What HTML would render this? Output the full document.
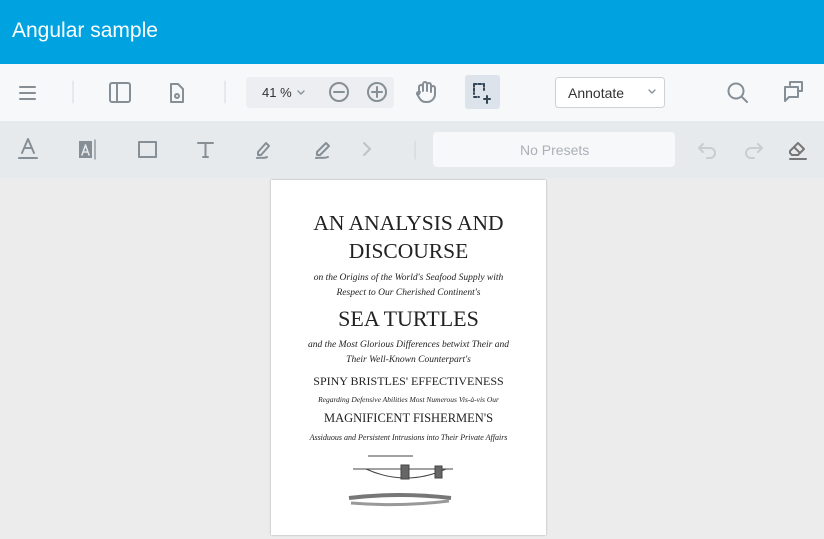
<html><head><style>
body{margin:0;width:824px;height:539px;overflow:hidden;background:#ececec;font-family:"Liberation Sans",sans-serif;position:relative}
.hdr{position:absolute;left:0;top:0;width:824px;height:64px;background:#00a3e0;color:#fff;font-size:21px}
.hdr span{position:absolute;left:12px;top:19px}
.tb1{position:absolute;top:64px;left:0;width:824px;height:57px;background:#f7f8fa}
.tb2{position:absolute;top:121px;left:0;width:824px;height:57px;background:#e7eaed}
svg{position:absolute}
.page{position:absolute;left:271px;top:180px;width:275px;height:355px;background:#fff;box-shadow:0 0 2px rgba(0,0,0,.3);font-family:"Liberation Serif",serif;color:#222;text-align:center}
.page div{position:absolute;left:0;width:275px;white-space:nowrap}
.i{font-style:italic}
</style></head><body>
<div class="hdr"><span>Angular sample</span></div>
<div class="tb1">
<svg width="824" height="57" viewBox="0 64 824 57" fill="none" stroke="#868e96" stroke-width="2" stroke-linecap="round" stroke-linejoin="round">
<path d="M20 87h15M20 93h15M20 99h15"/>
<path d="M73 81v22M225 81v22" stroke="#d6dadf" stroke-width="1"/>
<rect x="110" y="83" width="20" height="19" rx="2"/><path d="M117 83v19"/>
<path d="M171 84h7l5 5v13h-12z"/><circle cx="177" cy="96" r="2"/>
<rect x="246" y="77" width="148" height="31" rx="4" fill="#eceef1" stroke="none"/>
<circle cx="339" cy="92" r="9"/><path d="M334 92h10"/>
<circle cx="377" cy="92" r="9"/><path d="M372 92h10M377 87v10"/>
<path d="M298 91l3 3 3-3" stroke-width="1.3"/>
<path d="M419 94v-7a2 2 0 014 0v4v-7a2 2 0 014 0v7v-6a2 2 0 014 0v7v-4a2 2 0 014 0v6a8 8 0 01-8 8h-1a7 7 0 01-6-3l-3-5a2 2 0 013-2z"/>
<rect x="465" y="75" width="35" height="34" rx="3" fill="#dce3ea" stroke="none"/>
<path d="M474 84h10M474 84v10M484 84v6M474 97h5M487 96v7M484 99h6" stroke="#345" stroke-dasharray="2.5 2"/>
<rect x="555.5" y="77.5" width="109" height="30" rx="3" fill="#fff" stroke="#cdd2d7" stroke-width="1"/>
<path d="M649 90l3 3 3-3" stroke-width="1.3"/>
<circle cx="736" cy="91" r="7.5"/><path d="M742 97l5 5"/>
<path d="M790 85v-3h12v9h-3M785 87h13v10h-9l-4 4z"/>
</svg>
<span style="position:absolute;left:262px;top:21px;font-size:13px;color:#333">41 %</span>
<span style="position:absolute;left:568px;top:21px;font-size:14px;color:#333">Annotate</span>
</div>
<div class="tb2">
<svg width="824" height="57" viewBox="0 121 824 57" fill="none" stroke="#868e96" stroke-width="2" stroke-linecap="round" stroke-linejoin="round">
<path d="M22 153l6-14 6 14M24.5 148h7M19 158h18"/>
<rect x="79" y="141" width="13" height="17" fill="#868e96" stroke="none"/><path d="M82 155l3.5-10 3.5 10M83 152h5" stroke="#e7eaed" stroke-width="1.5"/><path d="M95 140v19" stroke-width="1.3"/>
<rect x="139" y="142" width="17" height="15"/>
<path d="M198 143h15M205.5 143v14M203 157h5"/>
<path d="M258 152l8-9 3 3-8 9h-3zM257 158c3-1 7 1 10-1"/>
<path d="M317 152l9-9 3 3-9 9h-3zM316 158c3-1 7 1 12-1"/>
<path d="M364 143l6 6-6 6" stroke="#bcc2c8"/>
<path d="M415 141v18" stroke="#cfd4d9" stroke-width="1"/>
<rect x="433" y="132" width="242" height="35" rx="4" fill="#f7f8fa" stroke="none"/>
<path d="M703 144l-4 4 4 4M699 148h11a5 5 0 010 10h-3" stroke="#c8cdd2"/>
<path d="M758 144l4 4-4 4M762 148h-11a5 5 0 000 10h3" stroke="#c8cdd2"/>
<path d="M790 151l8-8 6 6-6 6h-6l-2-2zM794 147l6 6M790 159h16" stroke="#777"/>
</svg>
<span style="position:absolute;left:520px;top:21px;font-size:14px;color:#aab0b6">No Presets</span>
</div>
<div class="page">
<div style="top:31px;font-size:21.5px">AN ANALYSIS AND</div>
<div style="top:59px;font-size:21.5px">DISCOURSE</div>
<div class="i" style="top:93px;font-size:9.5px">on the Origins of the World's Seafood Supply with</div>
<div class="i" style="top:108px;font-size:9.5px">Respect to Our Cherished Continent's</div>
<div style="top:126px;font-size:22px">SEA TURTLES</div>
<div class="i" style="top:160px;font-size:9.5px">and the Most Glorious Differences betwixt Their and</div>
<div class="i" style="top:175px;font-size:9.5px">Their Well-Known Counterpart's</div>
<div style="top:194px;font-size:12px">SPINY BRISTLES' EFFECTIVENESS</div>
<div class="i" style="top:215px;font-size:7.5px">Regarding Defensive Abilities Most Numerous Vis-à-vis Our</div>
<div style="top:231px;font-size:12.5px">MAGNIFICENT FISHERMEN'S</div>
<div class="i" style="top:253px;font-size:8px">Assiduous and Persistent Intrusions into Their Private Affairs</div>
<svg width="275" height="355" style="left:0;top:0" fill="none" stroke="#444" stroke-width="1">
<path d="M97 276h45M82 289h100M95 289q40 18 80 0"/>
<rect x="130" y="285" width="8" height="14" fill="#666"/><rect x="164" y="286" width="7" height="12" fill="#666"/>
<path d="M78 318q50-6 102 0" stroke-width="4" stroke="#777"/><path d="M80 323q50 4 98-2" stroke-width="3" stroke="#999"/>
</svg>
</div>
</body></html>
